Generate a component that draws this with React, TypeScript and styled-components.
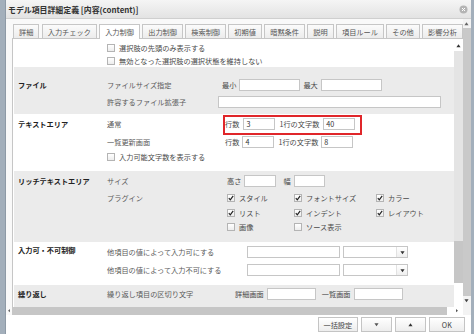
import styled, { createGlobalStyle } from "styled-components";

const GlobalStyle = createGlobalStyle`
  html, body { margin: 0; padding: 0; }
  body {
    width: 474px;
    height: 334px;
    overflow: hidden;
    background: #a3afbb;
    font-family: "Noto Sans CJK JP", "Liberation Sans", sans-serif;
    font-size: 7.2px;
    color: #333;
  }
  * { box-sizing: border-box; }
`;

const Page = styled.div`
  width: 474px;
  height: 334px;
  padding: 0 4px 0 5px;
  display: flex;
`;

const Dialog = styled.div`
  flex: 1;
  display: flex;
  flex-direction: column;
  background: #f9f9f9;
  border-left: 1px solid #8e9aa6;
`;

const TitleBar = styled.div`
  height: 19px;
  display: flex;
  align-items: center;
  padding: 0 3px 0 2px;
  background: linear-gradient(#f5f5f5, #e3e3e3);
  border-bottom: 1px solid #cfcfcf;
`;

const Title = styled.span`
  font-size: 7.9px;
  font-weight: bold;
  color: #333;
`;

const Close = styled.span`
  margin-left: auto;
  display: flex;
`;

const Body = styled.div`
  flex: 1;
  display: flex;
  min-height: 0;
`;

const Gutter = styled.div`
  width: 6px;
  display: flex;
  flex-direction: column;
  justify-content: flex-end;
  align-items: center;
  padding-bottom: 2px;
`;

const Main = styled.div`
  flex: 1;
  display: flex;
  flex-direction: column;
  min-width: 0;
`;

const TabRow = styled.div`
  height: 19px;
  display: flex;
  align-items: flex-end;
  gap: 2.3px;
  padding-left: 1px;
`;

const Tab = styled.div<{ $active?: boolean }>`
  height: ${(p) => (p.$active ? 15 : 14)}px;
  margin-bottom: ${(p) => (p.$active ? -1 : 0)}px;
  padding: 0 5px;
  display: flex;
  align-items: center;
  white-space: nowrap;
  border: 1px solid #c6c6c6;
  border-bottom: none;
  background: ${(p) => (p.$active ? "#fff" : "linear-gradient(#fbfbfb, #ececec)")};
  color: #555;
  position: relative;
  z-index: 1;
`;

const Panel = styled.div`
  flex: 1;
  display: flex;
  flex-direction: column;
  min-height: 0;
  background: #fff;
  border-top: 1px solid #c6c6c6;
  border-left: 1px solid #c6c6c6;
`;

const PanelRow = styled.div`
  flex: 1;
  display: flex;
  min-height: 0;
`;

const Content = styled.div`
  flex: 1;
  overflow: hidden;
  padding-left: 1px;
`;

const Section = styled.div<{ $gray?: boolean; $pt: number; $pb: number }>`
  display: grid;
  grid-template-columns: 89px 1fr;
  align-items: start;
  padding: ${(p) => p.$pt}px 0 ${(p) => p.$pb}px 4px;
  background: ${(p) => (p.$gray ? "#ebebeb" : "#fff")};
`;

const SectionTitle = styled.div<{ $h: number }>`
  height: ${(p) => p.$h}px;
  display: flex;
  align-items: center;
  font-weight: bold;
  color: #222;
`;

const Rows = styled.div<{ $gap?: number }>`
  display: flex;
  flex-direction: column;
  gap: ${(p) => p.$gap ?? 0}px;
`;

const Row = styled.div<{ $h?: number; $top?: boolean }>`
  display: flex;
  align-items: ${(p) => (p.$top ? "flex-start" : "center")};
  height: ${(p) => (p.$h ? `${p.$h}px` : "auto")};
`;

const Label = styled.div<{ $lh?: number }>`
  width: 115px;
  flex-shrink: 0;
  color: #5a5a5a;
  white-space: nowrap;
  line-height: ${(p) => (p.$lh ? `${p.$lh}px` : "normal")};
`;

const Controls = styled.div<{ $indent?: number }>`
  display: flex;
  align-items: center;
  gap: 3px;
  margin-left: ${(p) => p.$indent ?? 0}px;
  white-space: nowrap;
`;

const Highlight = styled.div`
  display: flex;
  align-items: center;
  gap: 4px;
  padding: 1px 5px 3px 0;
  margin: -3px -7px -5px -2px;
  border: 2px solid #e0262a;
`;

const Unit = styled.span<{ $ml?: number }>`
  color: #4a4a4a;
  margin-left: ${(p) => p.$ml ?? 0}px;
`;

const TextBox = styled.input<{ $w: number }>`
  width: ${(p) => p.$w}px;
  height: 12px;
  padding: 0 2px;
  border: 1px solid #c6c6c6;
  background: #fff;
  font: inherit;
  color: #333;
  outline: none;
`;

const Select = styled.div<{ $w: number }>`
  width: ${(p) => p.$w}px;
  height: 12px;
  display: flex;
  justify-content: flex-end;
  border: 1px solid #c6c6c6;
  background: #fff;
`;

const SelectArrow = styled.span`
  width: 11px;
  display: flex;
  align-items: center;
  justify-content: center;
  border-left: 1px solid #e2e2e2;
  background: linear-gradient(#fff, #efefef);
`;

const CheckItem = styled.label`
  display: flex;
  align-items: center;
  gap: 4px;
  color: #4a4a4a;
  white-space: nowrap;
`;

const Box = styled.span`
  width: 8px;
  height: 8px;
  display: flex;
  align-items: center;
  justify-content: center;
  border: 1px solid #b4b4b4;
  background: linear-gradient(#fff, #ededed);
`;

const PluginGrid = styled.div`
  display: grid;
  grid-template-columns: 67px 82px auto;
  grid-auto-rows: 14.5px;
  align-items: center;
  margin-left: 5px;
`;

const InnerScroll = styled.div`
  width: 9px;
  display: flex;
  flex-direction: column;
  background: #fff;
`;

const ScrollArrow = styled.div<{ $h: number }>`
  height: ${(p) => p.$h}px;
  display: flex;
  align-items: center;
  justify-content: center;
  flex-shrink: 0;
`;

const Track = styled.div<{ $color: string; $flex?: number; $size?: number }>`
  flex: ${(p) => (p.$size ? `0 0 ${p.$size}px` : p.$flex ?? 1)};
  background: ${(p) => p.$color};
`;

const HScroll = styled.div`
  height: 8px;
  display: flex;
  align-items: stretch;
  padding-right: 1px;
`;

const OuterScroll = styled.div`
  width: 8px;
  display: flex;
  flex-direction: column;
  background: #f3f3f3;
  padding-bottom: 10px;
`;

const Footer = styled.div`
  height: 19px;
  display: flex;
  justify-content: flex-end;
  align-items: flex-start;
  gap: 3px;
  padding: 2px 6px 0 0;
  background: #fff;
`;

const Button = styled.div<{ $w: number }>`
  width: ${(p) => p.$w}px;
  height: 15px;
  display: flex;
  align-items: center;
  justify-content: center;
  border: 1px solid #c4c4c4;
  background: linear-gradient(#ffffff, #ededed);
  color: #444;
`;

type Dir = "up" | "down" | "left" | "right";

const Arrow = ({ dir, size = 5, color = "#333" }: { dir: Dir; size?: number; color?: string }) => {
  const pts: Record<Dir, string> = {
    up: "0,5 5,5 2.5,1.5",
    down: "0,1.5 5,1.5 2.5,5",
    left: "4,0 4,5 1,2.5",
    right: "1,0 1,5 4,2.5",
  };
  return (
    <svg width={size} height={size} viewBox="0 0 5 6">
      <polygon points={pts[dir]} fill={color} />
    </svg>
  );
};

const Check = ({ on }: { on?: boolean }) => (
  <Box>
    {on && (
      <svg width="6" height="6" viewBox="0 0 6 6">
        <path d="M0.8 3.2 L2.3 4.8 L5.2 0.9" stroke="#222" strokeWidth="1.2" fill="none" />
      </svg>
    )}
  </Box>
);

const tabs = ["詳細", "入力チェック", "入力制御", "出力制御", "検索制御", "初期値", "暗黙条件", "説明", "項目ルール", "その他", "影響分析"];

const plugins: [string, boolean][] = [
  ["スタイル", true],
  ["フォントサイズ", true],
  ["カラー", true],
  ["リスト", true],
  ["インデント", true],
  ["レイアウト", true],
  ["画像", false],
  ["ソース表示", false],
];

const App = () => (
  <>
    <GlobalStyle />
    <Page>
      <Dialog>
        <TitleBar>
          <Title>モデル項目詳細定義 [内容(content)]</Title>
          <Close>
            <svg width="9" height="9" viewBox="0 0 9 9">
              <circle cx="4.5" cy="4.5" r="4" fill="#b4b4b4" />
              <path d="M3 3 L6 6 M6 3 L3 6" stroke="#fff" strokeWidth="1" />
            </svg>
          </Close>
        </TitleBar>
        <Body>
          <Gutter>
            <Arrow dir="left" size={4} color="#666" />
          </Gutter>
          <Main>
            <TabRow>
              {tabs.map((t) => (
                <Tab key={t} $active={t === "入力制御"}>
                  {t}
                </Tab>
              ))}
            </TabRow>
            <Panel>
              <PanelRow>
                <Content>
                  <Section $pt={2} $pb={0}>
                    <div />
                    <Rows>
                      <Row $h={13}>
                        <CheckItem>
                          <Check />
                          選択肢の先頭のみ表示する
                        </CheckItem>
                      </Row>
                      <Row $h={13}>
                        <CheckItem>
                          <Check />
                          無効となった選択肢の選択状態を維持しない
                        </CheckItem>
                      </Row>
                    </Rows>
                  </Section>

                  <Section $gray $pt={9} $pb={4}>
                    <SectionTitle $h={17}>ファイル</SectionTitle>
                    <Rows>
                      <Row $h={17}>
                        <Label>ファイルサイズ指定</Label>
                        <Controls>
                          <Unit>最小</Unit>
                          <TextBox $w={61} readOnly value="" />
                          <Unit>最大</Unit>
                          <TextBox $w={61} readOnly value="" />
                        </Controls>
                      </Row>
                      <Row $h={17}>
                        <Label>許容するファイル拡張子</Label>
                        <Controls $indent={-4}>
                          <TextBox $w={223} readOnly value="" />
                        </Controls>
                      </Row>
                    </Rows>
                  </Section>

                  <Section $pt={1} $pb={9}>
                    <SectionTitle $h={18}>テキストエリア</SectionTitle>
                    <Rows>
                      <Row $h={18}>
                        <Label>通常</Label>
                        <Controls $indent={3}>
                          <Highlight>
                            <Unit>行数</Unit>
                            <TextBox $w={32} readOnly value="3" />
                            <Unit>1行の文字数</Unit>
                            <TextBox $w={32} readOnly value="40" />
                          </Highlight>
                        </Controls>
                      </Row>
                      <Row $h={18}>
                        <Label>一覧更新画面</Label>
                        <Controls $indent={3}>
                          <Unit>行数</Unit>
                          <TextBox $w={32} readOnly value="4" />
                          <Unit $ml={1}>1行の文字数</Unit>
                          <TextBox $w={32} readOnly value="8" />
                        </Controls>
                      </Row>
                      <Row $h={11}>
                        <CheckItem>
                          <Check />
                          入力可能文字数を表示する
                        </CheckItem>
                      </Row>
                    </Rows>
                  </Section>

                  <Section $gray $pt={3} $pb={7.5}>
                    <SectionTitle $h={14}>リッチテキストエリア</SectionTitle>
                    <Rows $gap={3}>
                      <Row $h={14}>
                        <Label>サイズ</Label>
                        <Controls $indent={5}>
                          <Unit>高さ</Unit>
                          <TextBox $w={32} readOnly value="" />
                          <Unit $ml={4}>幅</Unit>
                          <TextBox $w={31} readOnly value="" />
                        </Controls>
                      </Row>
                      <Row $top>
                        <Label $lh={14.5}>プラグイン</Label>
                        <PluginGrid>
                          {plugins.map(([name, on]) => (
                            <CheckItem key={name}>
                              <Check on={on} />
                              {name}
                            </CheckItem>
                          ))}
                        </PluginGrid>
                      </Row>
                    </Rows>
                  </Section>

                  <Section $pt={1} $pb={6}>
                    <SectionTitle $h={14}>入力可・不可制御</SectionTitle>
                    <Rows>
                      <Row $h={18}>
                        <Label>他項目の値によって入力可にする</Label>
                        <Controls $indent={25}>
                          <TextBox $w={93} readOnly value="" />
                          <Select $w={65}>
                            <SelectArrow>
                              <Arrow dir="down" size={5} />
                            </SelectArrow>
                          </Select>
                        </Controls>
                      </Row>
                      <Row $h={18}>
                        <Label>他項目の値によって入力不可にする</Label>
                        <Controls $indent={25}>
                          <TextBox $w={93} readOnly value="" />
                          <Select $w={65}>
                            <SelectArrow>
                              <Arrow dir="down" size={5} />
                            </SelectArrow>
                          </Select>
                        </Controls>
                      </Row>
                    </Rows>
                  </Section>

                  <Section $gray $pt={2} $pb={6}>
                    <SectionTitle $h={14}>繰り返し</SectionTitle>
                    <Rows>
                      <Row $h={14}>
                        <Label>繰り返し項目の区切り文字</Label>
                        <Controls $indent={13}>
                          <Unit>詳細画面</Unit>
                          <TextBox $w={49} readOnly value="" />
                          <Unit $ml={3}>一覧画面</Unit>
                          <TextBox $w={49} readOnly value="" />
                        </Controls>
                      </Row>
                    </Rows>
                  </Section>
                </Content>
                <InnerScroll>
                  <ScrollArrow $h={12}>
                    <Arrow dir="up" size={5} />
                  </ScrollArrow>
                  <Track $color="#e4e4e4" $size={190} />
                  <Track $color="#c6c6c6" $size={42} />
                  <Track $color="#fff" />
                </InnerScroll>
              </PanelRow>
              <HScroll>
                <Track $color="#c6c6c6" $size={434} />
                <Track $color="#fff" />
                <ScrollArrow $h={8}>
                  <Arrow dir="right" size={4} color="#555" />
                </ScrollArrow>
                <Track $color="#fff" $size={3} />
              </HScroll>
            </Panel>
          </Main>
          <OuterScroll>
            <ScrollArrow $h={9}>
              <Arrow dir="up" size={5} color="#666" />
            </ScrollArrow>
            <Track $color="#c9c9c9" />
            <ScrollArrow $h={9}>
              <Arrow dir="down" size={5} color="#444" />
            </ScrollArrow>
          </OuterScroll>
        </Body>
        <Footer>
          <Button $w={40}>一括設定</Button>
          <Button $w={31}>
            <Arrow dir="down" size={5} color="#555" />
          </Button>
          <Button $w={31}>
            <Arrow dir="up" size={5} color="#333" />
          </Button>
          <Button $w={36}>OK</Button>
        </Footer>
      </Dialog>
    </Page>
  </>
);

export default App;
